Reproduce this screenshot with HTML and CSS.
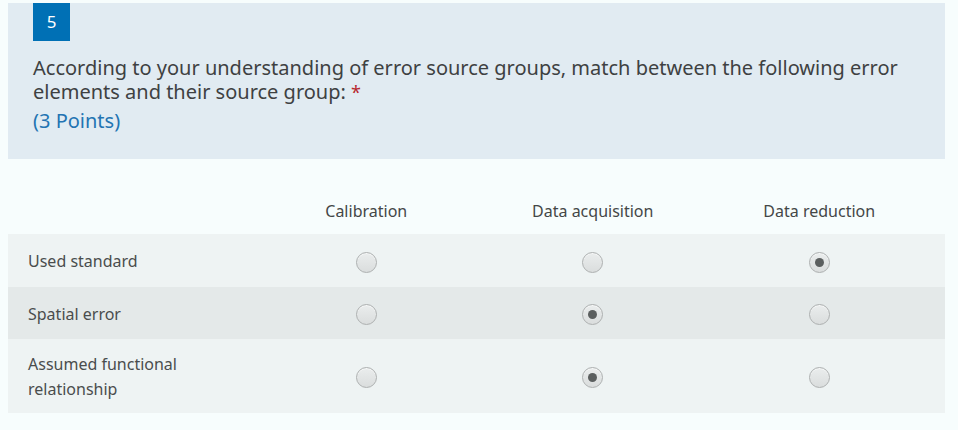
FILE: index.html
```html
<!DOCTYPE html>
<html lang="en">
<head>
<meta charset="utf-8">
<title>Question 5</title>
<link rel="stylesheet" href="styles.css">
</head>
<body>
<div class="page">
  <section class="question">
    <div class="badge">5</div>
    <div class="qtext">According to your understanding of error source groups, match between the following error elements and their source group: <span class="req">*</span></div>
    <div class="points">(3 Points)</div>
  </section>
  <div class="matrix">
    <div class="head">
      <div class="cell label"></div>
      <div class="cell">Calibration</div>
      <div class="cell">Data acquisition</div>
      <div class="cell">Data reduction</div>
    </div>
    <div class="row odd">
      <div class="cell label">Used standard</div>
      <div class="cell"><input type="radio" name="r1" class="radio"></div>
      <div class="cell"><input type="radio" name="r1" class="radio"></div>
      <div class="cell"><input type="radio" name="r1" class="radio" checked></div>
    </div>
    <div class="row even">
      <div class="cell label">Spatial error</div>
      <div class="cell"><input type="radio" name="r2" class="radio"></div>
      <div class="cell"><input type="radio" name="r2" class="radio" checked></div>
      <div class="cell"><input type="radio" name="r2" class="radio"></div>
    </div>
    <div class="row odd tall">
      <div class="cell label">Assumed functional<br>relationship</div>
      <div class="cell"><input type="radio" name="r3" class="radio"></div>
      <div class="cell"><input type="radio" name="r3" class="radio" checked></div>
      <div class="cell"><input type="radio" name="r3" class="radio"></div>
    </div>
  </div>
</div>
</body>
</html>
```
FILE: styles.css
```css
html, body {
  margin: 0;
  padding: 0;
  background: #f7fdfd;
}
body {
  font-family: "Noto Sans", "Open Sans", sans-serif;
  color: #3b3b3b;
}
.page {
  padding: 3px 13px 0 8px;
}
.question {
  background: #e1ebf2;
  padding: 0 25px 0 25px;
  height: 156px;
}
.badge {
  width: 37px;
  height: 38px;
  background: #0070b5;
  color: #ffffff;
  font-size: 17px;
  line-height: 38px;
  text-align: center;
}
.qtext {
  margin-top: 15px;
  font-size: 20px;
  line-height: 24px;
  color: #3e4142;
  max-width: 880px;
}
.req {
  color: #b7282e;
  font-size: 18px;
}
.points {
  margin-top: 5px;
  font-size: 20px;
  line-height: 24px;
  color: #2374b2;
}
.head, .row {
  display: grid;
  grid-template-columns: 245px 226.5px 226.5px 226.5px 1fr;
}
.head {
  height: 75px;
  align-items: end;
}
.head .cell {
  text-align: center;
  font-size: 16px;
  line-height: 22px;
  padding-bottom: 12px;
  color: #444747;
}
.row {
  min-height: 53px;
  align-items: center;
}
.row.even {
  min-height: 52px;
}
.odd {
  background: #eef3f3;
}
.even {
  background: #e4e9e9;
}
.row .cell {
  display: flex;
  justify-content: center;
  align-items: center;
  padding-top: 3px;
}
.row .cell.label {
  display: block;
  padding: 13px 20px 11px;
  font-size: 16px;
  line-height: 25px;
  color: #4a4d4d;
}
.radio {
  appearance: none;
  -webkit-appearance: none;
  margin: 0;
  width: 21px;
  height: 21px;
  border-radius: 50%;
  border: 1px solid #adb0b0;
  background: linear-gradient(#eaeded, #dadddd);
  box-shadow: inset 0 1px 0 rgba(255,255,255,0.6);
  box-sizing: border-box;
  position: relative;
}
.radio:checked::after {
  content: "";
  position: absolute;
  left: 5px;
  top: 5px;
  width: 9px;
  height: 9px;
  border-radius: 50%;
  background: #5b5f5f;
}
```
